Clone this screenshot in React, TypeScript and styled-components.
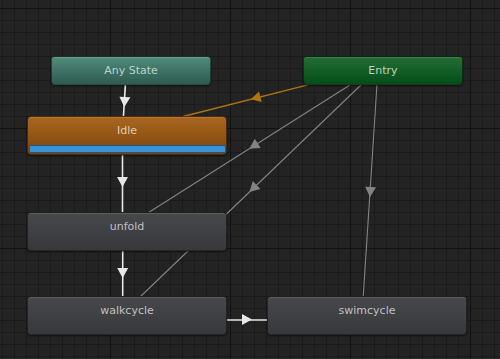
import React from "react";
import styled, { createGlobalStyle, css } from "styled-components";

const GlobalStyle = createGlobalStyle`
  html, body { margin: 0; padding: 0; background: #222222; overflow: hidden; }
  #root { width: 500px; height: 359px; }
`;

const Canvas = styled.div`
  position: relative;
  width: 500px;
  height: 359px;
  overflow: hidden;
  background-color: #232323;
  background-image:
    linear-gradient(to right, #121212 1px, transparent 1px),
    linear-gradient(to bottom, #121212 1px, transparent 1px),
    linear-gradient(to right, #1b1b1b 1px, transparent 1px),
    linear-gradient(to bottom, #1b1b1b 1px, transparent 1px);
  background-size: 120px 100%, 100% 120px, 12px 100%, 100% 12px;
  background-position: 110px 0, 0 8px, 2px 0, 0 8px;
`;

const Edges = styled.svg`
  position: absolute;
  inset: 0;
  width: 500px;
  height: 359px;
`;

type Variant = "any" | "entry" | "active" | "plain";

const variants: Record<Variant, ReturnType<typeof css>> = {
  any: css`
    background: linear-gradient(to bottom, #538c7e 0%, #3f7567 45%, #2e5c51 100%);
    color: rgba(222, 236, 231, 0.8);
  `,
  entry: css`
    background: linear-gradient(to bottom, #256c34 0%, #15602a 45%, #054c1a 100%);
    color: rgba(226, 236, 228, 0.82);
  `,
  active: css`
    background: linear-gradient(to bottom, #a8661f 0%, #975716 45%, #7a430f 100%);
    color: rgba(240, 228, 214, 0.84);
    border-color: #4e2a08;
  `,
  plain: css`
    background: linear-gradient(to bottom, #46484b 0%, #3f4144 45%, #36383b 100%);
    color: rgba(222, 222, 222, 0.84);
  `,
};

const Node = styled.div<{ $variant: Variant }>`
  position: absolute;
  box-sizing: border-box;
  border: 1px solid rgba(0, 0, 0, 0.45);
  border-radius: 4px;
  box-shadow: 0 1px 2px rgba(0, 0, 0, 0.55), inset 0 1px 0 rgba(255, 255, 255, 0.12);
  display: flex;
  flex-direction: column;
  ${(p) => variants[p.$variant]}
`;

const Label = styled.div`
  height: 26px;
  display: flex;
  align-items: center;
  justify-content: center;
  font-family: "DejaVu Sans", "Liberation Sans", sans-serif;
  font-size: 11px;
`;

const Progress = styled.div`
  margin: 2px 0 0 1px;
  height: 8px;
  box-sizing: border-box;
  background: #3a91d3;
  border: 1px solid #21557f;
  border-radius: 1px;
`;

type NodeDef = { id: string; label: string; variant: Variant; x: number; y: number; w: number; h: number; progress?: boolean };

const nodes: NodeDef[] = [
  { id: "any", label: "Any State", variant: "any", x: 51, y: 56, w: 160, h: 29 },
  { id: "entry", label: "Entry", variant: "entry", x: 303, y: 56, w: 160, h: 29 },
  { id: "idle", label: "Idle", variant: "active", x: 27, y: 116, w: 200, h: 39, progress: true },
  { id: "unfold", label: "unfold", variant: "plain", x: 27, y: 212, w: 200, h: 39 },
  { id: "walk", label: "walkcycle", variant: "plain", x: 27, y: 296, w: 200, h: 39 },
  { id: "swim", label: "swimcycle", variant: "plain", x: 267, y: 296, w: 200, h: 39 },
];

type EdgeDef = { from: [number, number]; to: [number, number]; at: [number, number]; color: string; width: number };

const WHITE = "#e8e8e8";
const GRAY = "#838383";
const ORANGE = "#b07410";

const edges: EdgeDef[] = [
  { from: [125.5, 83], to: [123.3, 118], at: [124.6, 102], color: WHITE, width: 1.6 },
  { from: [122.5, 153], to: [122.5, 214], at: [122.5, 182], color: WHITE, width: 1.6 },
  { from: [122.7, 249], to: [122.7, 298], at: [122.7, 273], color: WHITE, width: 1.6 },
  { from: [225, 320], to: [269, 320], at: [247, 319.5], color: WHITE, width: 1.6 },
  { from: [308, 84.8], to: [183, 116.5], at: [255.5, 98], color: ORANGE, width: 1.3 },
  { from: [351.5, 84], to: [147, 213.5], at: [253.5, 146], color: GRAY, width: 1.1 },
  { from: [362, 84], to: [140, 297], at: [253, 188.5], color: GRAY, width: 1.1 },
  { from: [377, 84], to: [363.2, 297], at: [370.3, 192], color: GRAY, width: 1.1 },
];

function arrowPoints(e: EdgeDef): string {
  const dx = e.to[0] - e.from[0];
  const dy = e.to[1] - e.from[1];
  const len = Math.hypot(dx, dy);
  const ux = dx / len;
  const uy = dy / len;
  const px = -uy;
  const py = ux;
  const [cx, cy] = e.at;
  const half = 5;
  const wing = 5.5;
  const tip = [cx + ux * half, cy + uy * half];
  const b1 = [cx - ux * half + px * wing, cy - uy * half + py * wing];
  const b2 = [cx - ux * half - px * wing, cy - uy * half - py * wing];
  return [tip, b1, b2].map((p) => p.map((v) => v.toFixed(2)).join(",")).join(" ");
}

export default function App() {
  return (
    <>
      <GlobalStyle />
      <Canvas>
        <Edges viewBox="0 0 500 359">
          {edges.map((e, i) => (
            <g key={i}>
              <line x1={e.from[0]} y1={e.from[1]} x2={e.to[0]} y2={e.to[1]} stroke={e.color} strokeWidth={e.width} />
              <polygon points={arrowPoints(e)} fill={e.color} />
            </g>
          ))}
        </Edges>
        {nodes.map((n) => (
          <Node
            key={n.id}
            $variant={n.variant}
            style={{ left: n.x, top: n.y, width: n.w, height: n.h }}
          >
            <Label>{n.label}</Label>
            {n.progress && <Progress />}
          </Node>
        ))}
      </Canvas>
    </>
  );
}
